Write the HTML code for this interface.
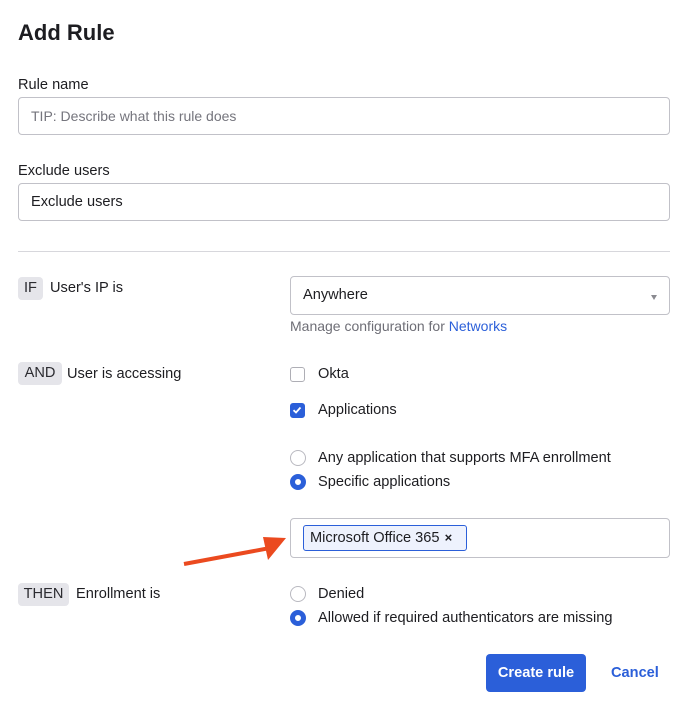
<!DOCTYPE html>
<html><head><style>
*{box-sizing:border-box;margin:0;padding:0}
body{width:689px;height:713px;background:#fff;font-family:"Liberation Sans",sans-serif;color:#1d1d21;position:relative;overflow:hidden;font-size:14.6px}
.a{position:absolute;white-space:nowrap}
.inp{position:absolute;border:1px solid #c1c1c8;border-radius:4px;background:#fff}
.badge{position:absolute;background:#e5e5ea;border-radius:4px;height:23px;line-height:23px;text-align:center;font-size:14.6px;color:#2b2b30}
.cb{position:absolute;width:15px;height:15px;border:1.5px solid #aeaeb5;border-radius:3px;background:#fff}
.rd{position:absolute;width:16px;height:16px;border-radius:50%;border:1.5px solid #b9b9c0;background:#fff}
.rd.on{border:5px solid #2b5fd9}
</style></head><body>
<div class="a" style="left:18px;top:20px;font-size:22px;font-weight:bold;color:#1d1d21">Add Rule</div>
<div class="a" style="left:18px;top:77px">Rule name</div>
<div class="inp" style="left:18px;top:97px;width:652px;height:38px"></div>
<div class="a" style="left:31px;top:108px;color:#75757d;font-size:14px">TIP: Describe what this rule does</div>
<div class="a" style="left:18px;top:163px">Exclude users</div>
<div class="inp" style="left:18px;top:183px;width:652px;height:38px"></div>
<div class="a" style="left:31px;top:194px">Exclude users</div>
<div class="a" style="left:18px;top:251px;width:652px;height:1px;background:#d7d7dc"></div>

<div class="badge" style="left:18px;top:277px;width:25px">IF</div>
<div class="a" style="left:50px;top:280px">User's IP is</div>
<div class="inp" style="left:290px;top:276px;width:380px;height:39px"></div>
<div class="a" style="left:303px;top:287px">Anywhere</div>
<div class="a" style="left:651px;top:295px;width:0;height:0;border-left:3.5px solid transparent;border-right:3.5px solid transparent;border-top:5px solid #8a8a90"></div>
<div class="a" style="left:290px;top:318px;color:#6e6e76;font-size:14px">Manage configuration for <span style="color:#2b5fd9">Networks</span></div>

<div class="badge" style="left:18px;top:362px;width:44px">AND</div>
<div class="a" style="left:67px;top:366px">User is accessing</div>
<div class="cb" style="left:290px;top:367px"></div>
<div class="a" style="left:318px;top:366px">Okta</div>
<div class="cb" style="left:290px;top:403px;background:#2b5fd9;border-color:#2b5fd9"><svg width="12" height="12" viewBox="0 0 12 12" style="position:absolute;left:0;top:0"><path d="M2.5 6.2L5 8.5L9.5 3.5" stroke="#fff" stroke-width="1.8" fill="none"/></svg></div>
<div class="a" style="left:318px;top:402px">Applications</div>
<div class="rd" style="left:290px;top:450px"></div>
<div class="a" style="left:318px;top:450px">Any application that supports MFA enrollment</div>
<div class="rd on" style="left:290px;top:474px"></div>
<div class="a" style="left:318px;top:474px">Specific applications</div>

<div class="inp" style="left:290px;top:518px;width:380px;height:40px"></div>
<div class="a" style="left:303px;top:525px;width:164px;height:26px;border:1px solid #2b5fd9;border-radius:3px;background:#eef2fd"></div>
<div class="a" style="left:310px;top:530px">Microsoft Office 365 <span style="font-weight:bold;font-size:13px;margin-left:1px">×</span></div>
<svg class="a" style="left:180px;top:530px" width="110" height="40"><path d="M4 34L90 18" stroke="#eb4a1f" stroke-width="4"/><path d="M83 7L106 8L88 30Z" fill="#eb4a1f"/></svg>

<div class="badge" style="left:18px;top:583px;width:51px">THEN</div>
<div class="a" style="left:76px;top:586px">Enrollment is</div>
<div class="rd" style="left:290px;top:586px"></div>
<div class="a" style="left:318px;top:586px">Denied</div>
<div class="rd on" style="left:290px;top:610px"></div>
<div class="a" style="left:318px;top:610px">Allowed if required authenticators are missing</div>

<div class="a" style="left:486px;top:654px;width:100px;height:38px;background:#2b5fd9;border-radius:4px;color:#fff;font-weight:bold;text-align:center;line-height:38px">Create rule</div>
<div class="a" style="left:611px;top:665px;color:#2b5fd9;font-weight:bold">Cancel</div>
</body></html>
